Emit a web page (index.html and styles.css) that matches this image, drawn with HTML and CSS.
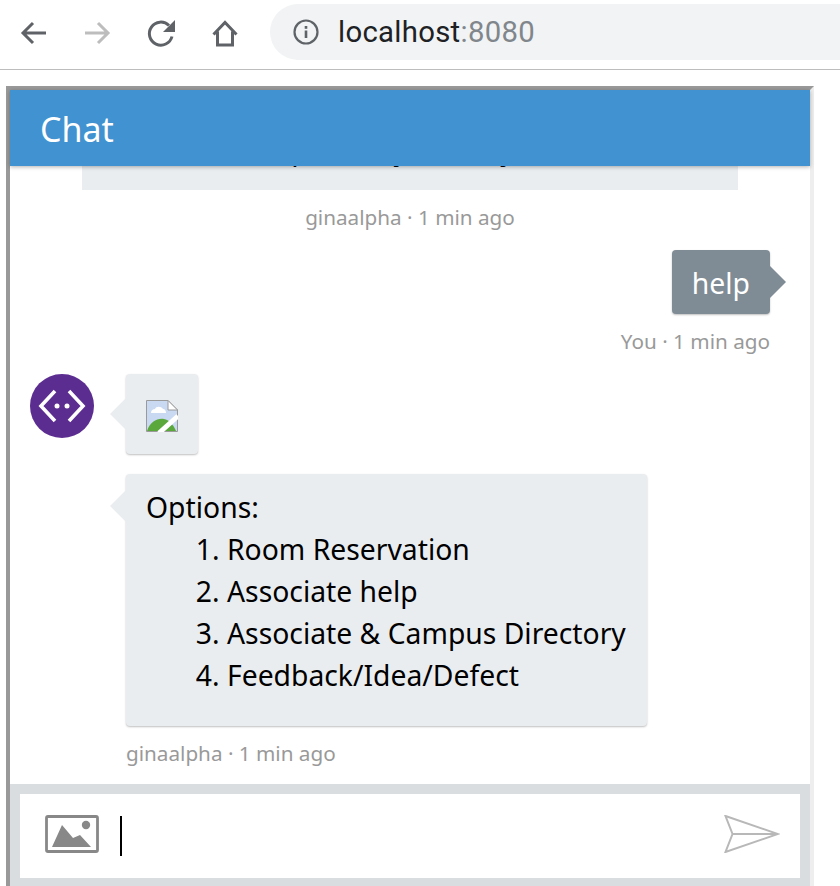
FILE: index.html
```html
<!DOCTYPE html>
<html lang="en">
<head>
<meta charset="utf-8">
<title>Chat</title>
<link rel="stylesheet" href="styles.css">
</head>
<body>
<div class="toolbar">
  <svg class="tb-icon" width="30" height="30" viewBox="0 0 30 30"><path d="M30 15H7M17 5 7 15 17 25" fill="none" stroke="#5f6368" stroke-width="3"/></svg>
  <svg class="tb-icon" width="30" height="30" viewBox="0 0 30 30"><path d="M3 15H26M16 5 26 15 16 25" fill="none" stroke="#bdbdbd" stroke-width="3"/></svg>
  <svg class="tb-icon" width="30" height="30" viewBox="0 0 30 30"><path d="M26 18.500A11.500 11.500 0 1 1 23 7.500" fill="none" stroke="#5f6368" stroke-width="3"/><path d="M29 2V14H17Z" fill="#5f6368"/></svg>
  <svg class="tb-icon" width="30" height="30" viewBox="0 0 30 30"><path d="M3.500 16.500 15 4.500 26.500 16.500M7.500 13.500V27H22.500V13.500" fill="none" stroke="#5f6368" stroke-width="3"/></svg>
  <div class="omnibox">
    <svg width="28" height="28" viewBox="0 0 28 28"><circle cx="14" cy="14" r="11.500" fill="none" stroke="#5f6368" stroke-width="2.200"/><rect x="12.700" y="12.500" width="2.600" height="7.500" fill="#5f6368"/><rect x="12.700" y="8" width="2.600" height="2.800" fill="#5f6368"/></svg>
    <span class="url">localhost<span class="port">:8080</span></span>
  </div>
</div>
<main class="chat">
  <header class="chat-head">Chat</header>
  <section class="messages">
    <div class="first-block">
      <div class="bubble-flat">What can I help them you are you</div>
      <div class="meta meta-center">ginaalpha · 1 min ago</div>
    </div>
    <div class="sent">
      <div class="bubble bubble-sent">help</div>
      <div class="meta">You · 1 min ago</div>
    </div>
    <div class="received">
      <div class="avatar">
        <svg width="64" height="64" viewBox="0 0 64 64"><circle cx="32" cy="32" r="32" fill="#5c2d91"/><path d="M25 17 11 32 25 47M39 17 53 32 39 47" fill="none" stroke="#fff" stroke-width="3.600"/><circle cx="27" cy="32" r="2.500" fill="#fff"/><circle cx="37" cy="32" r="2.500" fill="#fff"/></svg>
      </div>
      <div class="stack">
        <div class="bubble bubble-in bubble-img">
          <svg width="32" height="32" viewBox="0 0 32 32">
            <path d="M.5.500H22L31.500 10V31.500H.5Z" fill="#c9d9f2" stroke="#9a9a9a"/>
            <path d="M22 .5V10H31.500Z" fill="#fff" stroke="#9a9a9a"/>
            <path d="M5 13c0-3 2-4 4-4 1-3 6-3 8 0 2 0 3 2 3 4Z" fill="#fff"/>
            <path d="M1 31C4 22 11 18 18 19c5 1 9 5 12 12Z" fill="#5aa83c"/>
            <path d="M13 33 32 16" stroke="#fff" stroke-width="5"/>
          </svg>
        </div>
        <div class="bubble bubble-in bubble-options">
          <div>Options:</div>
          <ol class="options">
            <li>Room Reservation</li>
            <li>Associate help</li>
            <li>Associate &amp; Campus Directory</li>
            <li>Feedback/Idea/Defect</li>
          </ol>
        </div>
        <div class="meta meta-in">ginaalpha · 1 min ago</div>
      </div>
    </div>
  </section>
  <footer class="composer">
    <div class="composer-box">
      <svg class="img-icon" width="54" height="38" viewBox="0 0 54 38"><rect x="1.500" y="1.500" width="51" height="35" rx="1.500" fill="none" stroke="#888" stroke-width="2.800"/><path d="M7 32 17 10 28 23 35 20 46 32Z" fill="#888"/><circle cx="41" cy="10" r="4.200" fill="#888"/></svg>
      <div class="caret"></div>
      <svg class="send-icon" width="56" height="38" viewBox="0 0 56 38"><path d="M1.500 1 54 19 1.500 37 8.500 19ZM8.500 19H54" fill="none" stroke="#b8b8b8" stroke-width="2"/></svg>
    </div>
  </footer>
</main>
</body>
</html>
```
FILE: styles.css
```css
* { box-sizing: border-box; }
html, body { margin: 0; height: 100%; overflow: hidden; background: #fff; }
body { font-family: "Noto Sans", "Open Sans", sans-serif; display: flex; flex-direction: column; }

.toolbar {
  height: 70px;
  flex: none;
  display: flex;
  align-items: flex-start;
  padding: 4px 0 0 16px;
  border-bottom: 1px solid #bdbdbd;
}
.tb-icon { margin-top: 14px; margin-right: 34px; flex: none; }
.tb-icon:nth-child(1) { margin-right: 36px; }
.tb-icon:nth-child(4) { margin-right: 30px; }
.omnibox {
  flex: 1;
  height: 56px;
  border-radius: 28px 0 0 28px;
  background: #f1f3f4;
  display: flex;
  align-items: center;
  padding-left: 22px;
  gap: 18px;
}
.url { font-size: 29.300px; color: #202124; font-family: "Roboto", sans-serif; letter-spacing: .3px; }
.port { color: #80868b; }

.chat {
  flex: 1;
  min-height: 0;
  margin: 16px 26px 0 6px;
  border-top: 4px solid #999;
  border-left: 4px solid #999;
  border-right: 4px solid #eee;
  display: flex;
  flex-direction: column;
}
.chat-head {
  flex: none;
  height: 76px;
  background: #4192d0;
  color: #fff;
  font-size: 34px;
  line-height: 78px;
  padding-left: 30px;
  box-shadow: 0 1px 4px rgba(0,0,0,.3);
  position: relative;
  z-index: 1;
}
.messages {
  flex: 1;
  min-height: 0;
  overflow: hidden;
  display: flex;
  flex-direction: column;
  justify-content: flex-end;
  padding-bottom: 17px;
}
.first-block { display: flex; flex-direction: column; align-items: center; margin-bottom: 19px; padding: 0 72px; }
.bubble-flat {
  width: 100%;
  background: #eaedf0;
  font-size: 28.300px;
  line-height: 42px;
  padding: 20px 20px 20px;
  color: #000;
  margin-bottom: 13px;
  white-space: nowrap;
}
.meta { font-size: 20.700px; line-height: 28px; color: #999; }
.sent { display: flex; flex-direction: column; align-items: flex-end; padding-right: 40px; margin-bottom: 19px; }
.sent .meta { margin-top: 13px; }
.bubble { border-radius: 4px; box-shadow: 0 1px 2px rgba(0,0,0,.25); position: relative; }
.bubble::after {
  content: "";
  position: absolute;
  top: 50%;
  width: 0;
  height: 0;
  border-style: solid;
  margin-top: -16px;
}
.bubble-sent {
  background: #7f8c95;
  color: #fff;
  font-size: 28.300px;
  line-height: 42px;
  padding: 12px 20px 10px;
}
.bubble-sent::after { left: 100%; border-width: 16px 0 16px 16px; border-color: transparent transparent transparent #7f8c95; }
.received { display: flex; padding-left: 20px; gap: 32px; }
.avatar { flex: none; height: 64px; }
.stack { display: flex; flex-direction: column; align-items: flex-start; }
.bubble-in { background: #eaedf0; color: #000; }
.bubble-in::after { right: 100%; border-width: 16px 16px 16px 0; border-color: transparent #eaedf0 transparent transparent; }
.bubble-img { width: 72px; height: 80px; padding: 26px 0 0 20px; margin-bottom: 20px; }
.bubble-img svg { display: block; }
.bubble-options { font-size: 28.300px; line-height: 42px; padding: 12px 21px 30px 20px; }
.bubble-options::after { top: 0; margin-top: 16px; }
.options { margin: 0; padding-left: 81px; }
.meta-in { margin-top: 13px; }

.composer { flex: none; height: 102px; background: #dadde0; padding: 10px 10px 8px; }
.composer-box { height: 84px; background: #fff; display: flex; align-items: center; padding: 0 20px 4px 25px; }
.img-icon { flex: none; }
.caret { width: 2px; height: 40px; background: #000; margin: 4px 0 0 21px; }
.send-icon { flex: none; margin-left: auto; }
```
